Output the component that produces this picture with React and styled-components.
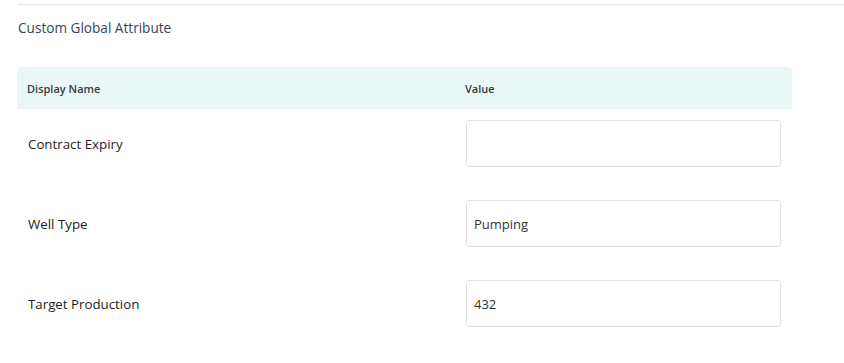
import React from "react";
import styled, { createGlobalStyle } from "styled-components";

const Global = createGlobalStyle`
  html, body { margin: 0; padding: 0; background: #fff; }
  body { font-family: "Open Sans", "Noto Sans", sans-serif; }
`;

const Page = styled.div`
  width: 844px;
  height: 363px;
  overflow: hidden;
  padding-left: 17px;
  box-sizing: border-box;
  padding-top: 4px;
`;

const Divider = styled.div`
  height: 1px;
  background: #e6e6e6;
  margin-left: 1px;
`;

const Title = styled.h3`
  margin: 14px 0 0 1px;
  font-size: 13.6px;
  font-weight: 400;
  line-height: 18px;
  color: #34465a;
`;

const Table = styled.div`
  width: 775px;
  margin-top: 30px;
`;

const HeaderRow = styled.div`
  display: grid;
  grid-template-columns: 448px 1fr;
  height: 42px;
  align-items: center;
  background: #e9f7f7;
  border-radius: 4px 4px 0 0;
`;

const HeaderCell = styled.div`
  font-size: 11px;
  font-weight: 600;
  color: #3a3a3a;
  padding-left: ${(p) => (p.$first ? "10px" : "0")};
`;

const Body = styled.div`
  display: flex;
  flex-direction: column;
  gap: 33px;
  padding-top: 11px;
`;

const Row = styled.div`
  display: grid;
  grid-template-columns: 449px 315px;
  align-items: center;
  height: 47px;
`;

const Label = styled.div`
  font-size: 13.3px;
  color: #1e1e1e;
  padding-left: 11px;
`;

const Input = styled.input`
  box-sizing: border-box;
  width: 315px;
  height: 47px;
  border: 1px solid #e2e2e2;
  border-radius: 3px;
  padding: 0 7px;
  font-family: "Open Sans", "Noto Sans", sans-serif;
  font-size: 13px;
  color: #333;
  outline: none;
  background: #fff;
`;

const rows = [
  { label: "Contract Expiry", value: "" },
  { label: "Well Type", value: "Pumping" },
  { label: "Target Production", value: "432" },
];

export default function App() {
  return (
    <>
      <Global />
      <Page>
        <Divider />
        <Title>Custom Global Attribute</Title>
        <Table>
          <HeaderRow>
            <HeaderCell $first>Display Name</HeaderCell>
            <HeaderCell>Value</HeaderCell>
          </HeaderRow>
          <Body>
            {rows.map((r) => (
              <Row key={r.label}>
                <Label>{r.label}</Label>
                <Input defaultValue={r.value} readOnly />
              </Row>
            ))}
          </Body>
        </Table>
      </Page>
    </>
  );
}
